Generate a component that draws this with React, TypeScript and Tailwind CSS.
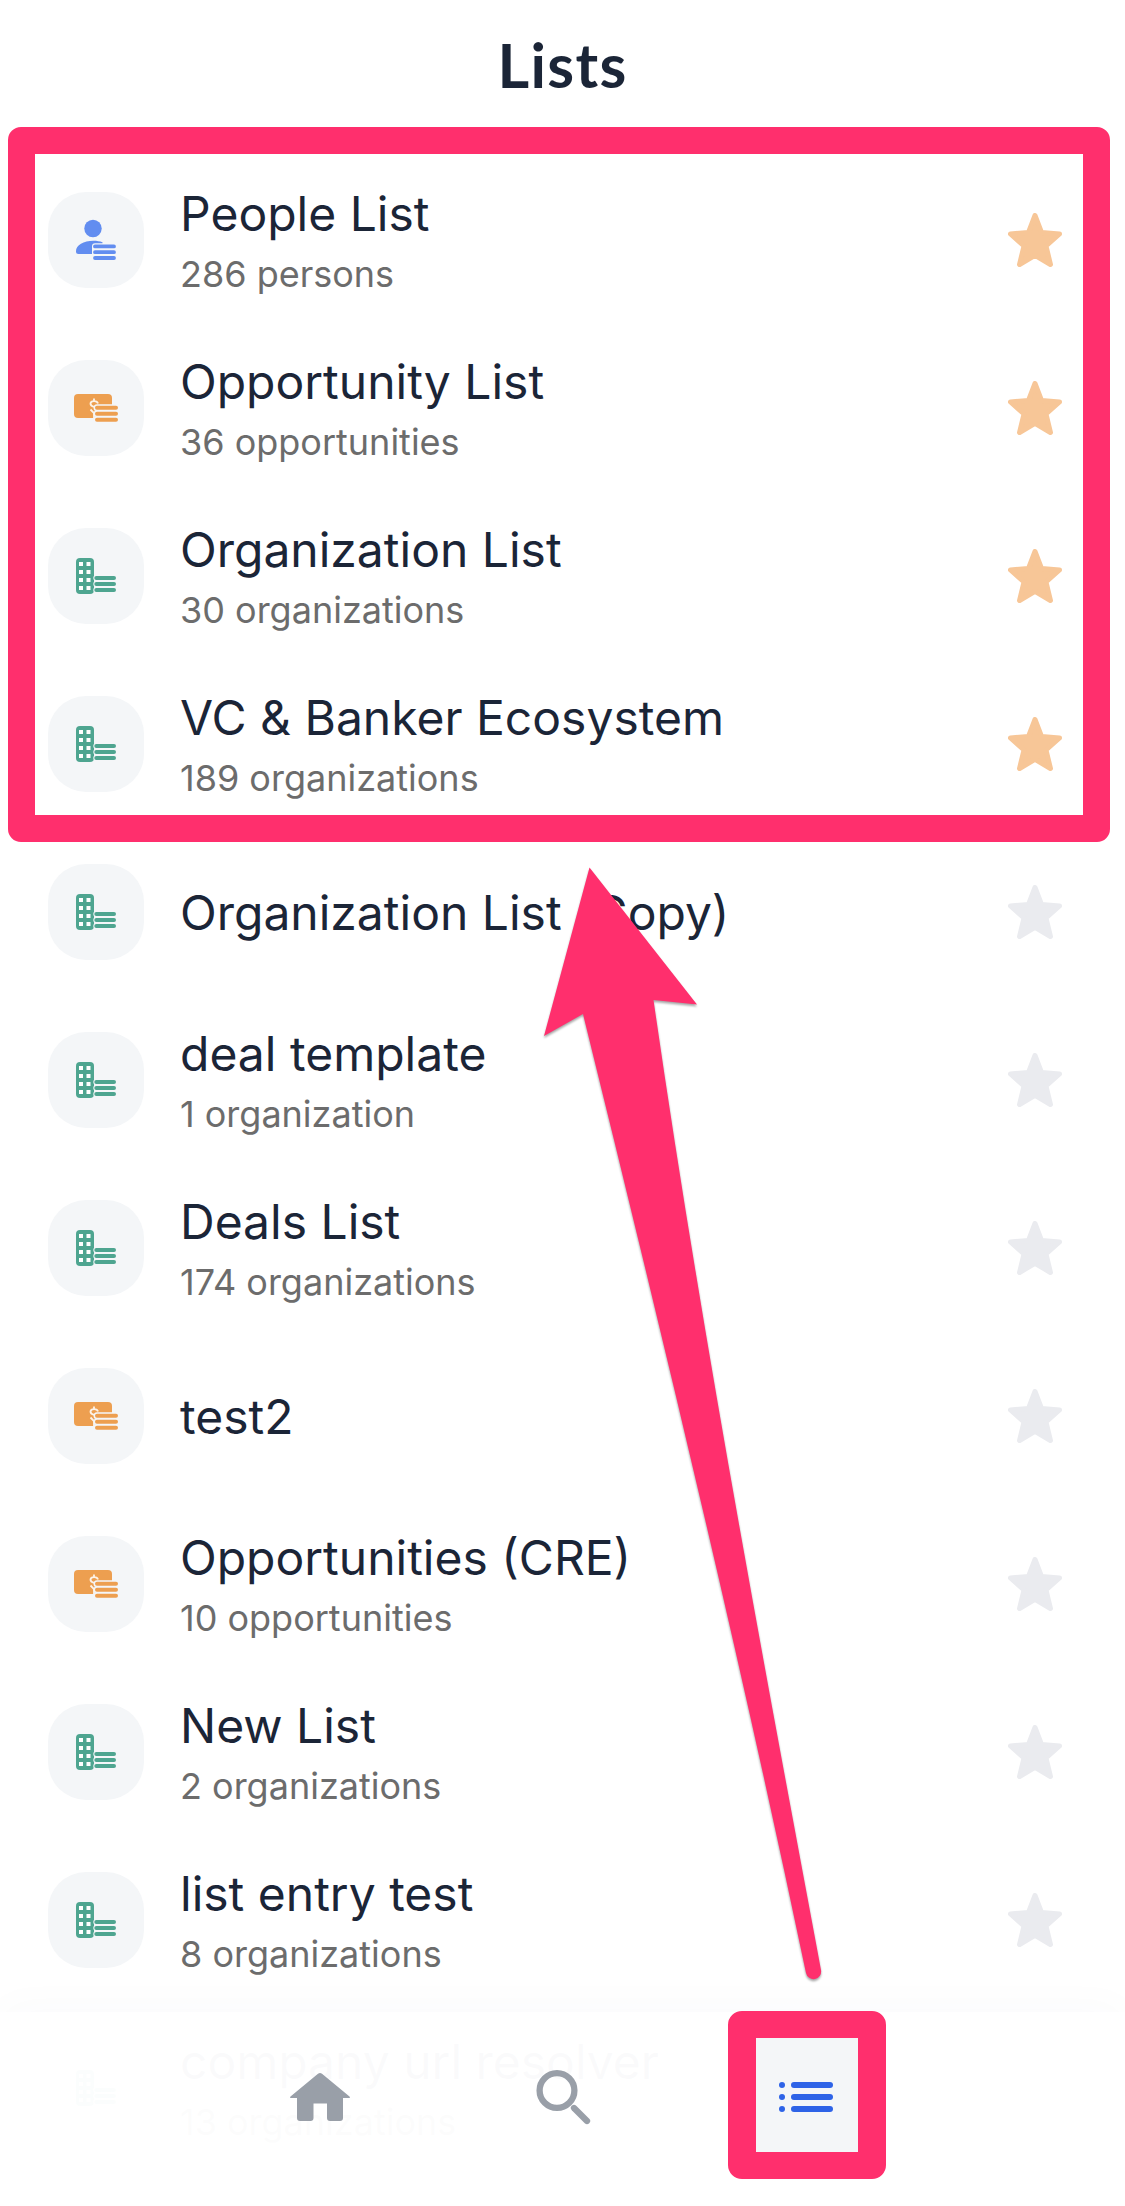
import React from 'react';

type Kind = 'person' | 'opportunity' | 'organization';

interface ListItem {
  name: string;
  count?: string;
  kind: Kind;
  starred?: boolean;
}

const lists: ListItem[] = [
  { name: 'People List', count: '286 persons', kind: 'person', starred: true },
  { name: 'Opportunity List', count: '36 opportunities', kind: 'opportunity', starred: true },
  { name: 'Organization List', count: '30 organizations', kind: 'organization', starred: true },
  { name: 'VC & Banker Ecosystem', count: '189 organizations', kind: 'organization', starred: true },
  { name: 'Organization List (Copy)', kind: 'organization' },
  { name: 'deal template', count: '1 organization', kind: 'organization' },
  { name: 'Deals List', count: '174 organizations', kind: 'organization' },
  { name: 'test2', kind: 'opportunity' },
  { name: 'Opportunities (CRE)', count: '10 opportunities', kind: 'opportunity' },
  { name: 'New List', count: '2 organizations', kind: 'organization' },
  { name: 'list entry test', count: '8 organizations', kind: 'organization' },
  { name: 'company url resolver', count: '13 organizations', kind: 'organization' },
];

function PersonIcon() {
  return (
    <svg viewBox="0 0 96 96" className="h-24 w-24" fill="#628df0">
      <circle cx="45" cy="36.5" r="8.7" />
      <path d="M28 59c0-5.500 7.500-10.200 17.500-10.200 3.400 0 6.300.5 9 1.500v1H47q-3 0-3 3V62H30.500Q28 62 28 59.500Z" />
      <path d="M47 54.400h19M47 60.200h19M47 66h19" stroke="#628df0" strokeWidth="3.800" strokeLinecap="round" />
    </svg>
  );
}

function OpportunityIcon() {
  return (
    <svg viewBox="0 0 96 96" className="h-24 w-24">
      <rect x="26" y="34" width="38" height="24" rx="4" fill="#ed9f50" />
      <path d="M50 43.500c-1-3.500-7.500-3-7.500.3 0 1.700 1.500 2.500 3.500 3M46 38.500v3M42.500 49.500l3.500 3.500v5" fill="none" stroke="#fdf3e8" strokeWidth="1.800" />
      <path d="M49 47.800h19M49 53.800h19M49 59.800h19" stroke="#f4f6f8" strokeWidth="7" strokeLinecap="round" />
      <path d="M49 47.800h19M49 53.800h19M49 59.800h19" stroke="#ed9f50" strokeWidth="4" strokeLinecap="round" />
    </svg>
  );
}

function OrganizationIcon() {
  return (
    <svg viewBox="0 0 96 96" className="h-24 w-24">
      <rect x="28" y="30" width="18" height="36" rx="4" fill="#4ea590" />
      <path d="M31 34h4v4h-4zM38.500 34h4v4h-4zM31 42h4v4h-4zM38.500 42h4v4h-4zM31 50h4v4h-4zM38.500 50h4v4h-4zM31 58h4v4h-4zM38.500 58h4v4h-4z" fill="#fff" />
      <path d="M48.300 50H66M48.300 56H66M48.300 62H66" stroke="#f4f6f8" strokeWidth="6" strokeLinecap="round" />
      <path d="M48.300 50H66M48.300 56H66M48.300 62H66" stroke="#4ea590" strokeWidth="4" strokeLinecap="round" />
    </svg>
  );
}

const icons = {
  person: PersonIcon,
  opportunity: OpportunityIcon,
  organization: OrganizationIcon,
};

function Star({ starred }: { starred?: boolean }) {
  return (
    <svg
      viewBox="0 0 54 54"
      className={starred ? 'h-[54px] w-[54px] text-[#f7c697]' : 'h-[54px] w-[54px] text-[#eaebef]'}
      fill="currentColor"
      stroke="currentColor"
      strokeWidth="5"
      strokeLinejoin="round"
    >
      <path d="M27 2.500 33.500 19.500 51.500 21 38 33 42.500 51.500 27 42.300 11.500 51.500 16 33 2.500 21 20.500 19.500Z" />
    </svg>
  );
}

function Row({ item }: { item: ListItem }) {
  const Icon = icons[item.kind];
  return (
    <li className="flex h-[168px] items-center pl-12 pr-[63px]">
      <div className="h-24 w-24 shrink-0 rounded-[38px] bg-[#f4f6f8]">
        <Icon />
      </div>
      <div className={item.count ? 'ml-9 flex-1 whitespace-nowrap pt-[5px]' : 'ml-9 flex-1 whitespace-nowrap pt-0.5'}>
        <p className="text-5xl leading-[60px] text-[#1b2537]">{item.name}</p>
        {item.count && <p className="mt-[3px] text-4xl leading-[54px] text-[#6c6c6c]">{item.count}</p>}
      </div>
      <Star starred={item.starred} />
    </li>
  );
}

function TabBar() {
  return (
    <nav className="absolute inset-x-0 bottom-0 flex h-[194px] justify-center bg-white/98 pt-[25px] shadow-[0_-8px_40px_rgba(20,30,80,0.02)]">
      <button className="flex h-[120px] w-[243px] items-center justify-center">
        <svg viewBox="0 0 60 48" className="h-12 w-[60px]" fill="#999fa8">
          <path d="M28 .7q2-1.400 4 0L59.500 23.500q1 1.500-.5 1.500h-6v20q0 3-3 3H40q-3 0-3-3V30.500H23.500V45q0 3-3 3H10q-3 0-3-3V25H1q-1.500 0-.5-1.500Z" />
        </svg>
      </button>
      <button className="flex h-[120px] w-[243px] items-center justify-center">
        <svg viewBox="0 0 56 56" className="h-14 w-14" fill="none" stroke="#999fa8" strokeWidth="6.300">
          <circle cx="22" cy="21.500" r="17.400" />
          <path d="M39 39 52 52" strokeLinecap="round" />
        </svg>
      </button>
      <button className="flex h-[120px] w-[243px] items-center justify-center">
        <span className="flex h-[120px] w-[120px] items-center justify-center bg-[#f4f6f8]">
          <svg viewBox="0 0 54 30" className="h-[30px] w-[54px]" fill="#2e63e7">
            <circle cx="3" cy="3" r="3" />
            <circle cx="3" cy="15" r="3" />
            <circle cx="3" cy="27" r="3" />
            <rect x="12" y="0" width="42" height="6" rx="3" />
            <rect x="12" y="12" width="42" height="6" rx="3" />
            <rect x="12" y="24" width="42" height="6" rx="3" />
          </svg>
        </span>
      </button>
    </nav>
  );
}

// Annotations drawn over the screen: two frames and the arrow between them
function Highlights() {
  return (
    <>
      <div className="absolute left-2 top-[127px] h-[715px] w-[1102px] rounded-[13px] border-[27px] border-[#ff2f6d]" />
      <div className="absolute left-[728px] top-[2011px] h-[168px] w-[158px] rounded-[14px] border-x-[28px] border-y-[27px] border-[#ff2f6d]" />
      <svg viewBox="0 0 1125 2206" className="absolute inset-0 h-full w-full drop-shadow-[0_2px_1px_rgba(0,0,0,0.35)]" fill="#ff2f6d">
        <path d="M589.500 867.500 697 1004.500 653.500 1000C700 1323 760.600 1647 821 1970A7.500 7.500 0 0 1 806 1973C739 1653 662 1334 583 1014L544 1036Z" />
      </svg>
    </>
  );
}

export default function App() {
  return (
    <div className="relative h-[2206px] w-[1125px] overflow-hidden bg-white font-['Inter',sans-serif]">
      <header className="flex h-[156px] justify-center pt-[29px]">
        <h1 className="font-['Lato',sans-serif] text-[61px] font-bold leading-[72px] tracking-[1.3px] text-[#1b2537]">Lists</h1>
      </header>
      <ul>
        {lists.map((item) => (
          <Row key={item.name} item={item} />
        ))}
      </ul>
      <TabBar />
      <Highlights />
    </div>
  );
}
